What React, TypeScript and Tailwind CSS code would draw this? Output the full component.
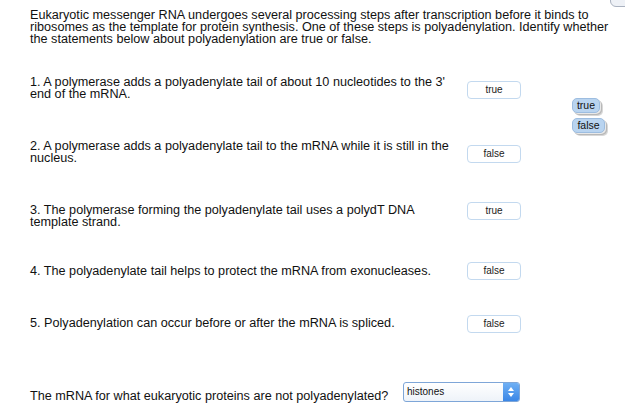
import React from "react";

const font = { fontFamily: '"Liberation Sans", Arial, sans-serif' };

function Box({ label, offset }: { label: string; offset: string }) {
  return (
    <div
      className={`ml-[12px] ${offset} flex h-[18px] w-[54px] shrink-0 items-center justify-center rounded-[4px] border border-[#c3d9ef] bg-white text-[10px] leading-none text-[#222]`}
    >
      {label}
    </div>
  );
}

function Row({
  text,
  label,
  offset,
  mt,
}: {
  text: string;
  label: string;
  offset: string;
  mt: string;
}) {
  return (
    <div className={`flex items-start ${mt}`}>
      <div className="w-[425px] shrink-0 text-[12.65px] leading-[12px] text-[#111]">{text}</div>
      <Box label={label} offset={offset} />
    </div>
  );
}

export default function App() {
  return (
    <div className="relative h-[412px] w-[625px] overflow-hidden bg-white" style={font}>
      <div className="absolute right-[-6px] top-[-6px] h-[13px] w-[21px] rounded-bl-[6px] border border-[#aab2c0] bg-[#eef1f6]" />

      <div className="pl-[30px] pt-[9px]">
        <div className="w-[590px] text-[12.65px] leading-[12px] text-[#111]">
          Eukaryotic messenger RNA undergoes several processing steps after transcription before it binds to
          ribosomes as the template for protein synthesis. One of these steps is polyadenylation. Identify whether
          the statements below about polyadenylation are true or false.
        </div>

        <Row
          mt="mt-[31px]"
          offset="mt-[5px]"
          label="true"
          text="1. A polymerase adds a polyadenylate tail of about 10 nucleotides to the 3' end of the mRNA."
        />
        <Row
          mt="mt-[40px]"
          offset="mt-[5px]"
          label="false"
          text="2. A polymerase adds a polyadenylate tail to the mRNA while it is still in the nucleus."
        />
        <Row
          mt="mt-[40px]"
          offset="-mt-[2px]"
          label="true"
          text="3. The polymerase forming the polyadenylate tail uses a polydT DNA template strand."
        />
        <Row
          mt="mt-[37px]"
          offset="-mt-[3px]"
          label="false"
          text="4. The polyadenylate tail helps to protect the mRNA from exonucleases."
        />
        <Row
          mt="mt-[37px]"
          offset="-mt-[2px]"
          label="false"
          text="5. Polyadenylation can occur before or after the mRNA is spliced."
        />

        <div className="mt-[49px] flex items-start">
          <div className="w-[373px] shrink-0 pt-[8px] text-[12.65px] leading-[12px] text-[#111]">
            The mRNA for what eukaryotic proteins are not polyadenylated?
          </div>
          <div className="flex h-[20px] w-[117px] overflow-hidden rounded-[3px] border border-[#7ea6d8] bg-gradient-to-b from-white to-[#eef3f9]">
            <div className="flex-1 pl-[3px] pt-[3px] text-[10px] leading-[11px] text-[#111]">histones</div>
            <div className="flex w-[16px] flex-col items-center justify-center gap-[2px] bg-gradient-to-b from-[#6fb0f4] to-[#3a86e6]">
              <svg width="6" height="4" viewBox="0 0 6 4">
                <path d="M0 4 L3 0 L6 4 Z" fill="white" />
              </svg>
              <svg width="6" height="4" viewBox="0 0 6 4">
                <path d="M0 0 L3 4 L6 0 Z" fill="white" />
              </svg>
            </div>
          </div>
        </div>
      </div>

      <div className="absolute left-[572px] top-[98px] flex h-[15px] w-[28px] items-center justify-center rounded-[5px] border border-[#9dbde0] bg-[#b9d4f0] text-[10.5px] leading-none text-[#111] shadow-[1px_1px_0_#e8e8e8,2px_2px_0_#b8b8b8,3px_3px_0_#d8d8d8]">
        true
      </div>
      <div className="absolute left-[572px] top-[118px] flex h-[15px] w-[33px] items-center justify-center rounded-[5px] border border-[#9dbde0] bg-[#b9d4f0] text-[10.5px] leading-none text-[#111] shadow-[1px_1px_0_#e8e8e8,2px_2px_0_#b8b8b8,3px_3px_0_#d8d8d8]">
        false
      </div>
    </div>
  );
}
